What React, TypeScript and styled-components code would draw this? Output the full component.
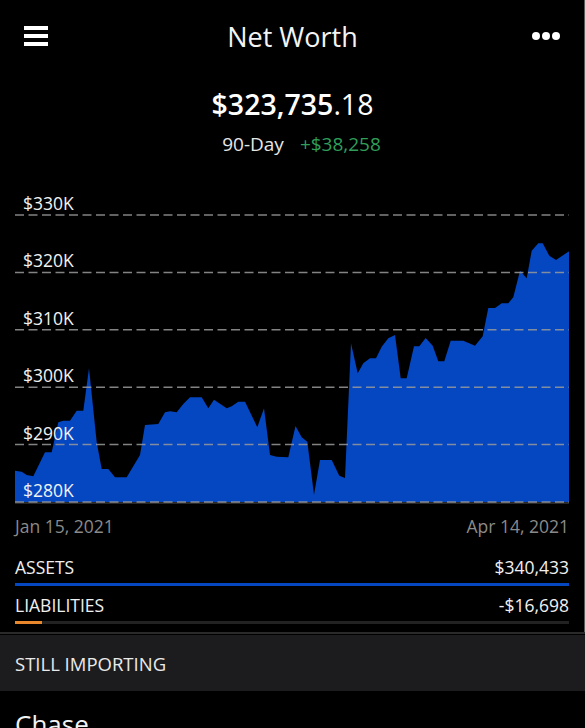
import React from "react";
import styled, { createGlobalStyle } from "styled-components";

const GlobalStyle = createGlobalStyle`
  html, body {
    margin: 0;
    padding: 0;
    background: #000;
  }
  body {
    font-family: "Open Sans", "Noto Sans", sans-serif;
    color: #f2f2f2;
  }
`;

const Page = styled.div`
  position: relative;
  width: 585px;
  height: 728px;
  overflow: hidden;
  background: #000;
`;

const ScrollIndicator = styled.div`
  position: absolute;
  top: 0;
  right: 0;
  width: 1px;
  height: 632px;
  background: #5a5a5a;
`;

const Header = styled.header`
  display: grid;
  grid-template-columns: 1fr auto 1fr;
  align-items: center;
  height: 72px;
  padding: 0 24px 0 24px;
`;

const Burger = styled.div`
  display: flex;
  flex-direction: column;
  gap: 4.5px;
  width: 24px;

  span {
    display: block;
    height: 3.5px;
    background: #fff;
  }
`;

const Title = styled.h1`
  margin: 0;
  font-size: 27px;
  font-weight: 400;
  color: #f4f4f4;
`;

const Dots = styled.div`
  justify-self: end;
  display: flex;
  gap: 2px;
  margin-right: 1px;

  span {
    width: 8px;
    height: 8px;
    border-radius: 50%;
    background: #fff;
  }
`;

const Summary = styled.div`
  display: flex;
  flex-direction: column;
  align-items: center;
  padding-top: 13px;
`;

const Amount = styled.div`
  font-size: 28.5px;
  line-height: 38px;
  color: #fff;

  b {
    font-weight: 600;
  }
`;

const Change = styled.div`
  display: flex;
  gap: 16px;
  margin-top: 8px;
  padding-left: 18px;
  font-size: 19px;
  line-height: 26px;
  color: #e6e6e6;
`;

const Gain = styled.span`
  color: #2f9e58;
`;

const ChartSvg = styled.svg`
  display: block;
  margin-top: 32px;
`;

const DateRow = styled.div`
  display: flex;
  justify-content: space-between;
  padding: 1px 16px 0 15px;
  font-size: 17.5px;
  line-height: 32px;
  color: #8a8a8a;
`;

const Totals = styled.div`
  display: flex;
  flex-direction: column;
  padding: 14px 16px 0 15px;
  border-bottom: 2px solid #2a2a2a;
`;

const TotalRow = styled.div`
  display: flex;
  justify-content: space-between;
  font-size: 17.5px;
  line-height: 22px;
  color: #f0f0f0;
`;

const Track = styled.div<{ $fill: string; $pct: number }>`
  height: 3px;
  margin: 5px 0 8px;
  background: linear-gradient(
    to right,
    ${(p) => p.$fill} ${(p) => p.$pct}%,
    #222 ${(p) => p.$pct}%
  );
`;

const Section = styled.div`
  display: flex;
  align-items: center;
  height: 56px;
  margin-top: 1px;
  padding: 0 15px;
  background: #1c1c1e;
  font-size: 18.5px;
  color: #eaeaea;
`;

const Account = styled.div`
  padding: 15px 15px 0;
  font-size: 26px;
  color: #f2f2f2;
`;

const TOP = 190;

const points: [number, number][] = [
  [15, 471.7], [21.7, 472.7], [26.7, 476], [33.3, 477.3], [45, 453.3], [51.7, 453.3],
  [58.3, 423.3], [63.3, 421.7], [70, 421.7], [76.7, 411.7], [83.3, 411.7], [89, 369.3],
  [96.7, 443.3], [101.7, 470], [108.3, 470], [115, 478.3], [126.7, 478.3], [140, 456],
  [145, 426], [158.3, 425], [165, 413.3], [170, 412.3], [176.7, 413.3], [183.3, 405],
  [190, 398.3], [201.7, 398.3], [208.3, 409.3], [214, 400.7], [226.7, 409.3],
  [231.7, 407.3], [238.3, 402.7], [245, 402.7], [257.3, 428.3], [264, 409.3],
  [270, 456], [276.7, 457.7], [288.3, 458.3], [295.5, 427], [301.7, 438.3],
  [307.3, 442.7], [314, 495.7], [320, 461], [331.7, 461], [339.3, 476.7], [345, 479],
  [351, 344.3], [357.7, 374.3], [363.3, 364.3], [370, 359.3], [376, 359.3],
  [381.7, 347.7], [388.3, 339.3], [395, 336], [400.7, 379.3], [406.7, 379.3],
  [414, 347.3], [419.3, 347.3], [425.7, 339], [432.7, 346.7], [438.3, 362.3],
  [444.3, 362.3], [450.7, 341.7], [463.3, 341.7], [475, 346.7], [482.7, 337.3],
  [488.3, 309], [495, 309], [501.7, 304.3], [508.3, 304.3], [513.3, 298.3],
  [520, 271.7], [526.7, 279.3], [531.7, 251.7], [538.3, 244.3], [542.7, 244.3],
  [549.3, 256.7], [556, 261], [568.3, 252.7], [569, 252.5],
];

const gridLines = [
  { label: "$330K", y: 216 },
  { label: "$320K", y: 273.4 },
  { label: "$310K", y: 330.8 },
  { label: "$300K", y: 388.2 },
  { label: "$290K", y: 445.6 },
  { label: "$280K", y: 503 },
];

const BASE = 503;

function NetWorthChart() {
  const area =
    points.map(([x, y], i) => `${i ? "L" : "M"}${x},${y - TOP}`).join(" ") +
    ` L569,${BASE - TOP} L15,${BASE - TOP} Z`;

  return (
    <ChartSvg width={585} height={320} viewBox="0 0 585 320">
      <path d={area} fill="#0546c1" />
      <line x1={15} x2={569} y1={BASE - TOP + 1} y2={BASE - TOP + 1} stroke="#555" strokeWidth={1} />
      {gridLines.map((g) => (
        <g key={g.label}>
          <line
            x1={15}
            x2={569}
            y1={g.y - TOP}
            y2={g.y - TOP}
            stroke="#9a9a9a"
            strokeOpacity={0.85}
            strokeWidth={1.5}
            strokeDasharray="9 4.5"
          />
          <text
            x={23}
            y={g.y - TOP - 5}
            fill="#f2f2f2"
            fontSize={17.5}
            fontFamily='"Open Sans", sans-serif'
          >
            {g.label}
          </text>
        </g>
      ))}
    </ChartSvg>
  );
}

export default function App() {
  return (
    <Page>
      <GlobalStyle />
      <Header>
        <Burger>
          <span />
          <span />
          <span />
        </Burger>
        <Title>Net Worth</Title>
        <Dots>
          <span />
          <span />
          <span />
        </Dots>
      </Header>

      <Summary>
        <Amount>
          <b>$323,735</b>.18
        </Amount>
        <Change>
          <span>90-Day</span>
          <Gain>+$38,258</Gain>
        </Change>
      </Summary>

      <NetWorthChart />

      <DateRow>
        <span>Jan 15, 2021</span>
        <span>Apr 14, 2021</span>
      </DateRow>

      <Totals>
        <TotalRow>
          <span>ASSETS</span>
          <span>$340,433</span>
        </TotalRow>
        <Track $fill="#0546c1" $pct={100} />
        <TotalRow>
          <span>LIABILITIES</span>
          <span>-$16,698</span>
        </TotalRow>
        <Track $fill="#e8872b" $pct={4.8} />
      </Totals>

      <Section>STILL IMPORTING</Section>
      <Account>Chase</Account>
      <ScrollIndicator />
    </Page>
  );
}
